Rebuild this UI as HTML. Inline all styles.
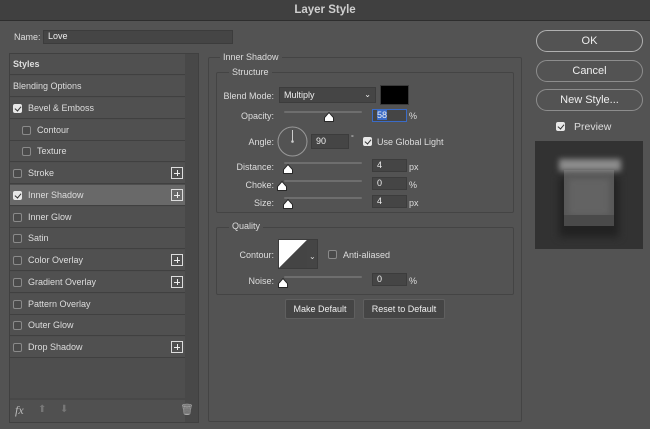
<!DOCTYPE html>
<html><head><style>
*{margin:0;padding:0;box-sizing:border-box}
body{width:650px;height:429px;background:#535353;font-family:"Liberation Sans",sans-serif;font-size:9px;color:#ddd;position:relative;overflow:hidden}
.a{position:absolute}
.title{left:0;top:0;width:650px;height:21px;background:#404040;border-bottom:1px solid #2e2e2e;text-align:center;line-height:20px;font-size:11.5px;font-weight:bold;color:#cfcfcf}
.row{position:absolute;left:10px;width:175px;height:21px;background:#505050;border-bottom:1px solid #404040;line-height:21px}
.row.sel{background:#696969}
.cb{position:absolute;width:9px;height:9px;border:1px solid #8a8a8a;border-radius:2px;background:#4a4a4a;top:6px}
.cb.on{background:#e8e8e8;border-color:#e8e8e8}
.cb.on:after{content:"";position:absolute;left:2px;top:0px;width:3px;height:5px;border:solid #333;border-width:0 1.5px 1.5px 0;transform:rotate(40deg)}
.plus{position:absolute;right:2px;top:4px;width:12px;height:12px;border:1px solid #ddd;}
.plus:before{content:"";position:absolute;left:2px;top:4.5px;width:6px;height:1.5px;background:#eee}
.plus:after{content:"";position:absolute;left:4.5px;top:2px;width:1.5px;height:6px;background:#eee}
.box{position:absolute;border:1px solid #444;border-radius:2px}
.leg{position:absolute;background:#535353;padding:0 3px;font-size:9px;color:#ddd}
.lbl{position:absolute;text-align:right;width:80px;font-size:9px;color:#ddd}
.inp{position:absolute;background:#454545;border:1px solid #3c3c3c;height:13px;line-height:11px;padding-left:4px;font-size:9px;color:#eee}
.track{position:absolute;height:2px;background:#6e6e6e;border-radius:1px}
.thumb{position:absolute;width:10px;height:10px}
.btn{position:absolute;border:1.5px solid #8d8d8d;border-radius:12px;height:22px;text-align:center;line-height:21px;font-size:11px;color:#eee}
.pbtn{position:absolute;background:#454545;border:1px solid #5f5f5f;border-radius:2px;height:20px;text-align:center;line-height:18px;color:#eee}
</style></head><body>
<div class="a title">Layer Style</div>
<div class="a" style="left:14px;top:32px">Name:</div>
<div class="inp" style="left:43px;top:30px;width:190px;height:14px">Love</div>

<div class="a" style="left:9px;top:53px;width:190px;height:370px;background:#484848;border:1px solid #404040"></div>
<div class="a" style="left:10px;top:54px;width:175px;height:344px;background:#4e4e4e"></div>
<div class="row" style="top:54px;font-weight:bold;padding-left:3px">Styles</div>
<div class="row" style="top:76px;padding-left:3px">Blending Options</div>
<div class="row" style="top:98px"><span class="cb on" style="left:3px"></span><span style="margin-left:18px">Bevel &amp; Emboss</span></div>
<div class="row" style="top:120px"><span class="cb" style="left:12px"></span><span style="margin-left:27px">Contour</span></div>
<div class="row" style="top:141px"><span class="cb" style="left:12px"></span><span style="margin-left:27px">Texture</span></div>
<div class="row" style="top:163px"><span class="cb" style="left:3px"></span><span style="margin-left:18px">Stroke</span><span class="plus"></span></div>
<div class="row sel" style="top:185px"><span class="cb on" style="left:3px"></span><span style="margin-left:18px">Inner Shadow</span><span class="plus"></span></div>
<div class="row" style="top:207px"><span class="cb" style="left:3px"></span><span style="margin-left:18px">Inner Glow</span></div>
<div class="row" style="top:228px"><span class="cb" style="left:3px"></span><span style="margin-left:18px">Satin</span></div>
<div class="row" style="top:250px"><span class="cb" style="left:3px"></span><span style="margin-left:18px">Color Overlay</span><span class="plus"></span></div>
<div class="row" style="top:272px"><span class="cb" style="left:3px"></span><span style="margin-left:18px">Gradient Overlay</span><span class="plus"></span></div>
<div class="row" style="top:294px"><span class="cb" style="left:3px"></span><span style="margin-left:18px">Pattern Overlay</span></div>
<div class="row" style="top:315px"><span class="cb" style="left:3px"></span><span style="margin-left:18px">Outer Glow</span></div>
<div class="row" style="top:337px"><span class="cb" style="left:3px"></span><span style="margin-left:18px">Drop Shadow</span><span class="plus"></span></div>
<div class="a" style="left:10px;top:400px;width:175px;height:22px;background:#505050"></div>
<div class="a" style="left:15px;top:403px;font-family:'Liberation Serif',serif;font-style:italic;font-size:12px;color:#bbb">fx</div>
<div class="a" style="left:38px;top:404px;color:#777;font-size:10px">⬆</div>
<div class="a" style="left:60px;top:404px;color:#777;font-size:10px">⬇</div>
<div class="a" style="left:180px;top:403px;color:#aaa;font-size:11px">🗑</div>

<div class="box" style="left:208px;top:57px;width:314px;height:365px"></div>
<div class="leg" style="left:220px;top:52px">Inner Shadow</div>
<div class="box" style="left:216px;top:72px;width:298px;height:141px"></div>
<div class="leg" style="left:229px;top:67px">Structure</div>
<div class="lbl" style="left:194px;top:91px">Blend Mode:</div>
<div class="inp" style="left:279px;top:87px;width:97px;height:16px;line-height:14px">Multiply<span style="position:absolute;right:4px;font-size:8px">⌄</span></div>
<div class="a" style="left:380px;top:85px;width:29px;height:20px;background:#000;border:1px solid #3a3a3a"></div>
<div class="lbl" style="left:194px;top:111px">Opacity:</div>
<div class="track" style="left:284px;top:111px;width:78px"></div>
<svg class="thumb" style="left:324px;top:112px" viewBox="0 0 9 9"><path d="M4.5 0.5 L8.5 5 L8.5 8.5 L0.5 8.5 L0.5 5 Z" fill="#fff" stroke="#222" stroke-width=".8"/></svg>
<div class="inp" style="left:372px;top:109px;width:35px;border-color:#3a6bc7;"><span style="background:#3a6bc7">58</span></div>
<div class="a" style="left:409px;top:111px">%</div>
<div class="lbl" style="left:194px;top:137px">Angle:</div>
<svg class="a" style="left:277px;top:126px" width="31" height="31"><circle cx="15.5" cy="15.5" r="14.5" fill="none" stroke="#999" stroke-width="1"/><line x1="15.5" y1="15.5" x2="15.5" y2="4" stroke="#ccc"/><circle cx="15.5" cy="15.5" r="1.3" fill="#ccc"/></svg>
<div class="inp" style="left:311px;top:134px;width:38px;height:15px;line-height:13px">90</div>
<div class="a" style="left:351px;top:135px;font-size:7px">°</div>
<span class="cb on" style="left:363px;top:137px"></span>
<div class="a" style="left:377px;top:137px">Use Global Light</div>
<div class="lbl" style="left:194px;top:162px">Distance:</div>
<div class="track" style="left:284px;top:162px;width:78px"></div>
<svg class="thumb" style="left:283px;top:164px" viewBox="0 0 9 9"><path d="M4.5 0.5 L8.5 5 L8.5 8.5 L0.5 8.5 L0.5 5 Z" fill="#fff" stroke="#222" stroke-width=".8"/></svg>
<div class="inp" style="left:372px;top:159px;width:35px">4</div><div class="a" style="left:409px;top:162px">px</div>
<div class="lbl" style="left:194px;top:180px">Choke:</div>
<div class="track" style="left:284px;top:180px;width:78px"></div>
<svg class="thumb" style="left:277px;top:181px" viewBox="0 0 9 9"><path d="M4.5 0.5 L8.5 5 L8.5 8.5 L0.5 8.5 L0.5 5 Z" fill="#fff" stroke="#222" stroke-width=".8"/></svg>
<div class="inp" style="left:372px;top:177px;width:35px">0</div><div class="a" style="left:409px;top:180px">%</div>
<div class="lbl" style="left:194px;top:198px">Size:</div>
<div class="track" style="left:284px;top:197px;width:78px"></div>
<svg class="thumb" style="left:283px;top:199px" viewBox="0 0 9 9"><path d="M4.5 0.5 L8.5 5 L8.5 8.5 L0.5 8.5 L0.5 5 Z" fill="#fff" stroke="#222" stroke-width=".8"/></svg>
<div class="inp" style="left:372px;top:195px;width:35px">4</div><div class="a" style="left:409px;top:198px">px</div>

<div class="box" style="left:216px;top:227px;width:298px;height:68px"></div>
<div class="leg" style="left:229px;top:221px">Quality</div>
<div class="lbl" style="left:194px;top:250px">Contour:</div>
<div class="a" style="left:278px;top:239px;width:40px;height:30px;background:#454545;border:1px solid #3c3c3c"></div>
<svg class="a" style="left:279px;top:240px" width="28" height="28"><polygon points="0,0 28,0 0,28" fill="#fff"/><polygon points="28,0 28,28 0,28" fill="#444"/></svg>
<div class="a" style="left:309px;top:252px;font-size:8px">⌄</div>
<span class="cb" style="left:328px;top:250px"></span>
<div class="a" style="left:343px;top:250px">Anti-aliased</div>
<div class="lbl" style="left:194px;top:276px">Noise:</div>
<div class="track" style="left:284px;top:276px;width:78px"></div>
<svg class="thumb" style="left:278px;top:278px" viewBox="0 0 9 9"><path d="M4.5 0.5 L8.5 5 L8.5 8.5 L0.5 8.5 L0.5 5 Z" fill="#fff" stroke="#222" stroke-width=".8"/></svg>
<div class="inp" style="left:372px;top:273px;width:35px">0</div><div class="a" style="left:409px;top:276px">%</div>
<div class="pbtn" style="left:285px;top:299px;width:70px">Make Default</div>
<div class="pbtn" style="left:363px;top:299px;width:82px">Reset to Default</div>

<div class="btn" style="left:536px;top:30px;width:107px;border-color:#b0b0b0">OK</div>
<div class="btn" style="left:536px;top:60px;width:107px">Cancel</div>
<div class="btn" style="left:536px;top:89px;width:107px">New Style...</div>
<span class="cb on" style="left:556px;top:122px"></span>
<div class="a" style="left:574px;top:121px;font-size:10.5px">Preview</div>
<div class="a" style="left:535px;top:141px;width:108px;height:108px;background:#323232;overflow:hidden">
 <div class="a" style="left:24px;top:36px;width:60px;height:60px;background:#222;filter:blur(4px)"></div>
 <div class="a" style="left:29px;top:29px;width:50px;height:56px;background:#585858"></div>
 <div class="a" style="left:34px;top:38px;width:40px;height:36px;background:#636363;filter:blur(3px)"></div>
 <div class="a" style="left:24px;top:18px;width:62px;height:12px;background:#8c8c8c;filter:blur(3px)"></div>
 <div class="a" style="left:29px;top:74px;width:50px;height:11px;background:#4a4a4a"></div>
</div>
</body></html>
